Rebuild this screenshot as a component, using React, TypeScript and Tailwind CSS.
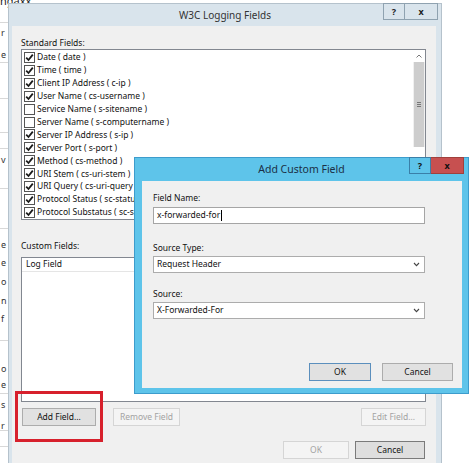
import React from 'react'

const standardFields: [string, boolean][] = [
  ['Date ( date )', true],
  ['Time ( time )', true],
  ['Client IP Address ( c-ip )', true],
  ['User Name ( cs-username )', true],
  ['Service Name ( s-sitename )', false],
  ['Server Name ( s-computername )', false],
  ['Server IP Address ( s-ip )', true],
  ['Server Port ( s-port )', true],
  ['Method ( cs-method )', true],
  ['URI Stem ( cs-uri-stem )', true],
  ['URI Query ( cs-uri-query )', true],
  ['Protocol Status ( sc-status )', true],
  ['Protocol Substatus ( sc-substatus )', true],
]

function CheckBox({ checked }: { checked: boolean }) {
  return (
    <span className="flex h-[11px] w-[11px] shrink-0 items-center justify-center border border-[#555] bg-white">
      {checked && (
        <svg width="9" height="9" viewBox="0 0 9 9">
          <path d="M1.2 4.6 L3.5 7 L7.8 1.6" fill="none" stroke="#1a1a1a" strokeWidth="1.8" />
        </svg>
      )}
    </span>
  )
}

function WinButton({
  label,
  width,
  disabled = false,
  variant = 'normal',
}: {
  label: string
  width: string
  disabled?: boolean
  variant?: 'normal' | 'default' | 'focus'
}) {
  let cls = 'border-[#acacac] bg-[#e1e1e1] text-[#111]'
  if (disabled) cls = 'border-[#d5d5d5] bg-[#f4f4f4] text-[#a3a3a3]'
  if (variant === 'default') cls = 'border-[#5b8fbd] bg-[#e1e1e1] text-[#111]'
  if (variant === 'focus') cls = 'border-[#7a7a7a] bg-[#dedede] text-[#111]'
  return (
    <div className={`flex h-[18px] items-center justify-center whitespace-nowrap border text-[8.5px] leading-none ${width} ${cls}`}>
      {label}
    </div>
  )
}

function Chevron() {
  return (
    <svg width="7" height="5" viewBox="0 0 7 5" className="mr-[4px]">
      <path d="M1 1 L3.5 3.6 L6 1" fill="none" stroke="#444" strokeWidth="1.1" />
    </svg>
  )
}

function BackgroundStrip() {
  const frags: [number, string][] = [
    [28, 'r'], [50, 'e'], [155, 'v'], [240, 'e'], [258, 'e'], [277, 'o'], [296, 'n'], [314, 'f'], [364, 'o'], [380, 'e'], [400, 's'], [421, 'r'],
  ]
  return (
    <div className="absolute left-0 top-0 h-full w-[8px] overflow-hidden bg-white">
      {frags.map(([y, ch]) => (
        <span key={y} className="absolute left-[1px] text-[9px] leading-none text-[#333]" style={{ top: y }}>
          {ch}
        </span>
      ))}
      {[22, 62, 98, 132, 148, 188, 228, 340, 393, 430, 446].map((y) => (
        <div key={y} className="absolute left-0 h-px w-full bg-[#d8d8d8]" style={{ top: y }} />
      ))}
    </div>
  )
}

function W3CDialog() {
  return (
    <div className="absolute left-[8px] top-[3px] flex h-[480px] w-[434px] flex-col border border-[#b5c2cc] bg-[#d9e4ec]">
      {/* title bar */}
      <div className="relative flex h-[22px] shrink-0 items-center justify-center">
        <span className="text-[10px] leading-none text-[#333]">W3C Logging Fields</span>
        <div className="absolute right-[3px] top-[-1px] flex">
          <div className="flex h-[17px] w-[22px] items-center justify-center border border-[#8fa2b0] bg-[#d9e4ec] text-[9px] font-bold text-[#222]">?</div>
          <div className="flex h-[17px] w-[33px] items-center justify-center border border-l-0 border-[#8fa2b0] bg-[#d9e4ec] text-[9px] font-bold text-[#222]">x</div>
        </div>
      </div>

      {/* client */}
      <div className="ml-[3px] mr-[5px] flex flex-1 flex-col bg-[#f0f0f0] pl-[9px] pt-[10px] text-[8.5px] text-[#111]">
        <div className="h-[13px] leading-[13px]">Standard Fields:</div>
        <div className="flex h-[171px] w-[405px] border border-[#828790] bg-white">
          <div className="flex flex-1 flex-col pl-[2px] pt-px">
            {standardFields.map(([label, checked]) => (
              <div key={label} className="flex h-[13px] items-center gap-[2px] whitespace-nowrap">
                <CheckBox checked={checked} />
                <span className="leading-none">{label}</span>
              </div>
            ))}
          </div>
          {/* scrollbar */}
          <div className="flex w-[12px] flex-col bg-[#f0f0f0]">
            <div className="flex h-[12px] items-center justify-center bg-white">
              <svg width="6" height="4" viewBox="0 0 6 4">
                <path d="M0.5 3.5 L3 1 L5.5 3.5" fill="none" stroke="#777" strokeWidth="1" />
              </svg>
            </div>
            <div className="mx-[1px] flex h-[85px] flex-col items-center justify-center gap-[1px] bg-[#cdcdcd]">
              <div className="h-px w-[4px] bg-[#777]" />
              <div className="h-px w-[4px] bg-[#777]" />
              <div className="h-px w-[4px] bg-[#777]" />
            </div>
            <div className="flex-1 bg-white" />
          </div>
        </div>

        <div className="mt-[19px] h-[13px] leading-[13px]">Custom Fields:</div>
        <div className="mt-[5px] flex h-[145px] w-[405px] flex-col border border-[#828790] bg-white">
          <div className="flex h-[14px] items-center border-b border-[#e5e5e5] pl-[4px] leading-none">Log Field</div>
        </div>

        <div className="mt-[6px] flex w-[405px] items-center">
          <WinButton label="Add Field..." width="w-[74px] ml-px" />
          <div className="ml-[17px]">
            <WinButton label="Remove Field" width="w-[67px]" disabled />
          </div>
          <div className="ml-auto">
            <WinButton label="Edit Field..." width="w-[65px]" disabled />
          </div>
        </div>

        <div className="mt-[15px] flex w-[404px] justify-end gap-[6px]">
          <WinButton label="OK" width="w-[66px]" disabled />
          <WinButton label="Cancel" width="w-[70px]" variant="focus" />
        </div>
      </div>

      {/* highlight around Add Field */}
      <div className="absolute left-[6px] top-[387px] h-[51px] w-[88px] border-[3px] border-[#d7202c]" />
    </div>
  )
}

function SelectBox({ value }: { value: string }) {
  return (
    <div className="flex h-[17px] w-[272px] items-center justify-between border border-[#acacac] bg-white pl-[3px] leading-none">
      <span>{value}</span>
      <Chevron />
    </div>
  )
}

function AddCustomFieldDialog() {
  return (
    <div className="absolute left-[134px] top-[157px] flex h-[237px] w-[335px] flex-col border border-[#3d9ccc] bg-[#5ec4ea]">
      <div className="relative flex h-[23px] shrink-0 items-center justify-center">
        <span className="text-[10.5px] leading-none text-[#1b2f45]">Add Custom Field</span>
        <div className="absolute right-[4px] top-[-1px] flex">
          <div className="flex h-[17px] w-[22px] items-center justify-center border border-[#3a7fa8] bg-[#5ec4ea] text-[9px] font-bold text-[#111]">?</div>
          <div className="flex h-[17px] w-[33px] items-center justify-center border border-l-0 border-[#a0403c] bg-[#c75050] text-[9px] font-bold text-[#111]">x</div>
        </div>
      </div>

      <div className="mb-[5px] ml-[7px] mr-[6px] flex flex-1 flex-col bg-[#f0f0f0] pl-[11px] pt-[10px] text-[8.5px] text-[#111]">
        <div className="h-[13px] leading-[13px]">Field Name:</div>
        <div className="mt-[3px] flex h-[17px] w-[272px] items-center border border-[#a5a5a5] bg-white pl-[3px] leading-none">
          <span>x-forwarded-for</span>
          <span className="ml-px h-[11px] w-px bg-black" />
        </div>

        <div className="mt-[17px] h-[13px] leading-[13px]">Source Type:</div>
        <div className="mt-[2px]">
          <SelectBox value="Request Header" />
        </div>

        <div className="mt-[14px] h-[13px] leading-[13px]">Source:</div>
        <div className="mt-[2px]">
          <SelectBox value="X-Forwarded-For" />
        </div>

        <div className="mt-auto mb-[7px] mr-[9px] flex justify-end gap-[11px]">
          <WinButton label="OK" width="w-[62px]" variant="default" />
          <WinButton label="Cancel" width="w-[71px]" />
        </div>
      </div>
    </div>
  )
}

export default function App() {
  return (
    <div className="relative h-[463px] w-[474px] overflow-hidden bg-white font-['Noto_Sans',sans-serif]">
      <BackgroundStrip />
      <div className="absolute left-0 top-[-5px] text-[11px] leading-none text-[#222]">ngaxx</div>
      <W3CDialog />
      <AddCustomFieldDialog />
    </div>
  )
}
